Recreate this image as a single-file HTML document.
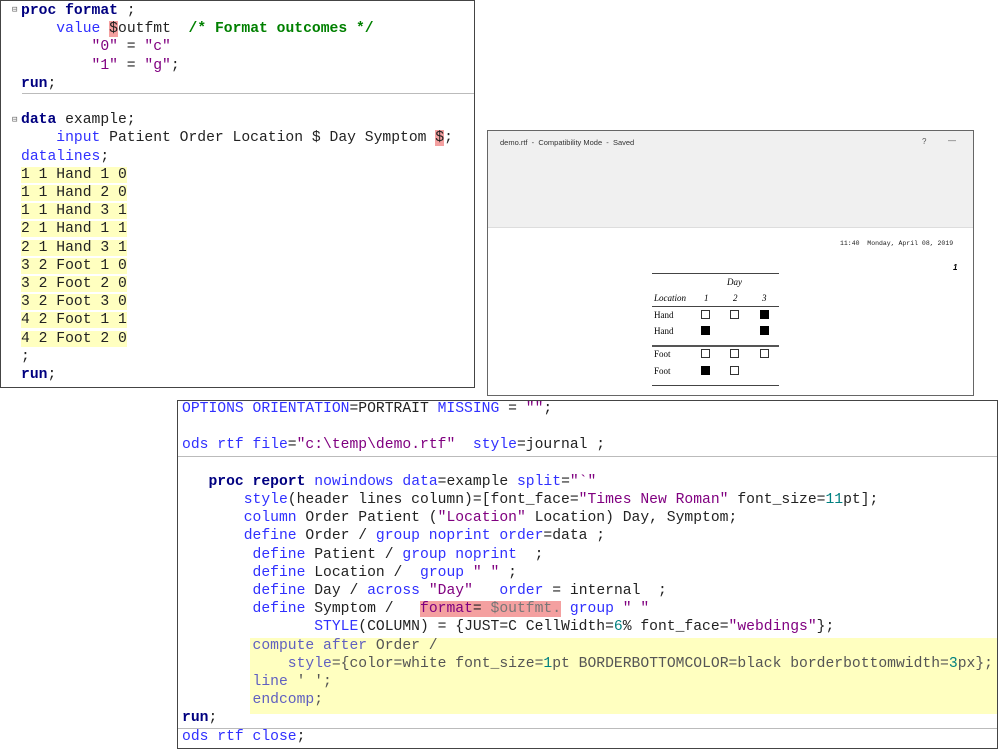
<!DOCTYPE html>
<html><head><meta charset="utf-8"><style>
body{margin:0;width:998px;height:749px;background:#fff;position:relative;overflow:hidden;font-family:"Liberation Mono",monospace}
.p{position:absolute;border:1px solid #444;background:#fff;box-sizing:border-box}
pre{margin:0;font-family:"Liberation Mono",monospace;font-size:14.7px;line-height:18.2px;color:#222;position:absolute}
.k{color:#3030ff}.b{color:#000080;font-weight:bold}.g{color:#008000;font-weight:bold}.s{color:#800080}.n{color:#008080}
.hl{background:#f4a0a0}.y{background:#ffffc0}
.sep{position:absolute;height:1px;background:#bbb}
.bx{display:inline-block;width:9px;height:9px;border:1px solid #333;box-sizing:border-box}
.bf{background:#000;border-color:#000}
.tb{position:absolute;font-family:"Liberation Serif",serif;font-size:9px;color:#000}
</style></head><body>
<div class="p" style="left:0;top:0;width:475px;height:388px;border-width:1px 1px 1px 1px">
<div class="sep" style="left:21px;top:92px;width:452px"></div>
<span style="position:absolute;left:11px;top:4px;font-size:9px;color:#666">⊟</span>
<span style="position:absolute;left:11px;top:114px;font-size:9px;color:#666">⊟</span>
<pre style="left:20px;top:1px"><span class="b">proc format</span> ;
    <span class="k">value</span> <span class="hl">$</span>outfmt  <span class="g">/* Format outcomes */</span>
        <span class="s">"0"</span> = <span class="s">"c"</span>
        <span class="s">"1"</span> = <span class="s">"g"</span>;
<span class="b">run</span>;

<span class="b">data</span> example;
    <span class="k">input</span> Patient Order Location $ Day Symptom <span class="hl">$</span>;
<span class="k">datalines</span>;
<span class="y">1 1 Hand 1 0</span>
<span class="y">1 1 Hand 2 0</span>
<span class="y">1 1 Hand 3 1</span>
<span class="y">2 1 Hand 1 1</span>
<span class="y">2 1 Hand 3 1</span>
<span class="y">3 2 Foot 1 0</span>
<span class="y">3 2 Foot 2 0</span>
<span class="y">3 2 Foot 3 0</span>
<span class="y">4 2 Foot 1 1</span>
<span class="y">4 2 Foot 2 0</span>
;
<span class="b">run</span>;</pre>
</div>

<div class="p" style="left:487px;top:130px;width:487px;height:266px;border-color:#666">
<div style="position:absolute;left:0;top:0;right:0;height:96px;background:#f0f0f0;border-bottom:1px solid #ddd"></div>
<div style="position:absolute;left:12px;top:7px;font-family:'Liberation Sans',sans-serif;font-size:7.5px;color:#333">demo.rtf &nbsp;- &nbsp;Compatibility Mode &nbsp;- &nbsp;Saved</div>
<div style="position:absolute;left:434px;top:6px;font-family:'Liberation Sans',sans-serif;font-size:8px;color:#555">?</div>
<div style="position:absolute;left:460px;top:5px;font-family:'Liberation Sans',sans-serif;font-size:8px;color:#555">—</div>
<div style="position:absolute;left:352px;top:109px;font-family:'Liberation Mono',monospace;font-size:6.5px;color:#222">11:40&nbsp; Monday, April 08, 2019</div>
<div style="position:absolute;left:465px;top:132px;font-family:'Liberation Sans',sans-serif;font-size:8px;font-weight:bold;font-style:italic">1</div>
<div class="sep" style="left:164px;top:142px;width:127px;background:#444"></div>
<div class="sep" style="left:164px;top:175px;width:127px;background:#444"></div>
<div class="sep" style="left:164px;top:214px;width:127px;height:2px;background:#555"></div>
<div class="sep" style="left:164px;top:254px;width:127px;background:#444"></div>
<div class="tb" style="left:239px;top:146px;font-style:italic">Day</div>
<div class="tb" style="left:166px;top:162px;font-style:italic">Location</div>
<div class="tb" style="left:216px;top:162px;font-style:italic">1</div>
<div class="tb" style="left:245px;top:162px;font-style:italic">2</div>
<div class="tb" style="left:274px;top:162px;font-style:italic">3</div>
<div class="tb" style="left:166px;top:179px">Hand</div>
<div class="tb" style="left:166px;top:195px">Hand</div>
<div class="tb" style="left:166px;top:218px">Foot</div>
<div class="tb" style="left:166px;top:235px">Foot</div>
<span class="bx" style="position:absolute;left:213px;top:179px"></span>
<span class="bx" style="position:absolute;left:242px;top:179px"></span>
<span class="bx bf" style="position:absolute;left:272px;top:179px"></span>
<span class="bx bf" style="position:absolute;left:213px;top:195px"></span>
<span class="bx bf" style="position:absolute;left:272px;top:195px"></span>
<span class="bx" style="position:absolute;left:213px;top:218px"></span>
<span class="bx" style="position:absolute;left:242px;top:218px"></span>
<span class="bx" style="position:absolute;left:272px;top:218px"></span>
<span class="bx bf" style="position:absolute;left:213px;top:235px"></span>
<span class="bx" style="position:absolute;left:242px;top:235px"></span>
</div>

<div class="p" style="left:177px;top:400px;width:821px;height:349px;border-color:#444">
<div class="sep" style="left:0;top:55px;width:819px"></div>
<div class="sep" style="left:0;top:327px;width:819px"></div>
<div style="position:absolute;left:72px;top:237px;width:747px;height:76px;background:#ffffc0"></div>
<pre style="left:4px;top:-1px"><span class="k">OPTIONS ORIENTATION</span>=PORTRAIT <span class="k">MISSING</span> = <span class="s">""</span>;

<span class="k">ods rtf file</span>=<span class="s">"c:\temp\demo.rtf"</span>  <span class="k">style</span>=journal ;

   <span class="b">proc report</span> <span class="k">nowindows data</span>=example <span class="k">split</span>=<span class="s">"`"</span>
       <span class="k">style</span>(header lines column)=[font_face=<span class="s">"Times New Roman"</span> font_size=<span class="n">11</span>pt];
       <span class="k">column</span> Order Patient (<span class="s">"Location"</span> Location) Day, Symptom;
       <span class="k">define</span> Order / <span class="k">group noprint order</span>=data ;
        <span class="k">define</span> Patient / <span class="k">group noprint</span>  ;
        <span class="k">define</span> Location /  <span class="k">group</span> <span class="s">" "</span> ;
        <span class="k">define</span> Day / <span class="k">across</span> <span class="s">"Day"</span>   <span class="k">order</span> = internal  ;
        <span class="k">define</span> Symptom /   <span class="hl"><span class="s">format</span>= <span style="color:#777">$outfmt.</span></span> <span class="k">group</span> <span class="s">" "</span>
               <span class="k">STYLE</span>(COLUMN) = {JUST=C CellWidth=<span class="n">6</span>% font_face=<span class="s">"webdings"</span>};
<span style="color:#555">        <span style="color:#6060c0">compute after</span> Order /
            <span style="color:#6060c0">style</span>={color=white font_size=<span class="n">1</span>pt BORDERBOTTOMCOLOR=black borderbottomwidth=<span class="n">3</span>px};
        <span style="color:#6060c0">line</span> ' ';
        <span style="color:#6060c0">endcomp</span>;</span>
<span class="b">run</span>;
<span class="k">ods rtf close</span>;</pre>
</div>
</body></html>
